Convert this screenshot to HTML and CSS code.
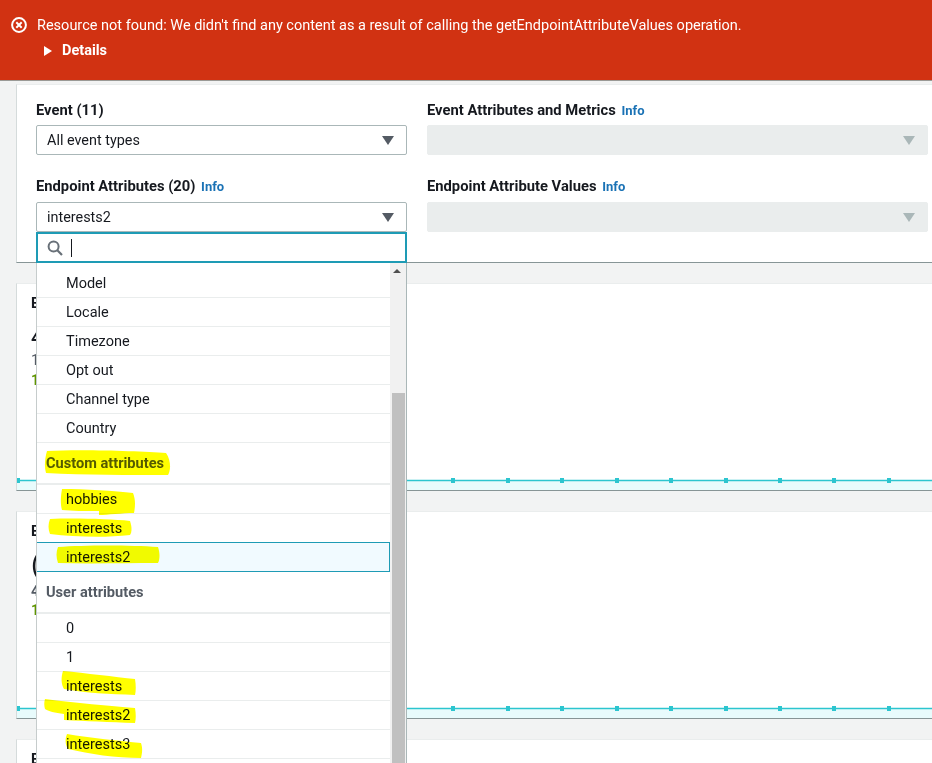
FILE: index.html
```html
<!DOCTYPE html>
<html lang="en">
<head>
<meta charset="utf-8">
<title>Endpoint attributes</title>
<link rel="stylesheet" href="styles.css">
</head>
<body>
<div class="banner">
  <svg class="banner-icon" width="16" height="16" viewBox="0 0 16 16"><circle cx="8" cy="8" r="6.9" fill="none" stroke="#fff" stroke-width="2"/><path d="M5.3 5.3l5.4 5.4M10.7 5.3l-5.4 5.4" stroke="#fff" stroke-width="2" fill="none"/></svg>
  <div class="banner-body">
    <div class="banner-msg">Resource not found: We didn't find any content as a result of calling the getEndpointAttributeValues operation.</div>
    <div class="banner-details"><span class="tri-right"></span><b>Details</b></div>
  </div>
</div>
<main class="main">
  <section class="panel">
    <div class="field">
      <div class="label label-tight">Event (11)</div>
      <div class="select"><span class="value">All event types</span><i class="tri-down"></i></div>
    </div>
    <div class="field">
      <div class="label label-tight">Event Attributes and Metrics <a class="info">Info</a></div>
      <div class="select disabled"><i class="tri-down"></i></div>
    </div>
    <div class="field">
      <div class="label">Endpoint Attributes (20) <a class="info">Info</a></div>
      <div class="select"><span class="value">interests2</span><i class="tri-down"></i></div>
      <div class="dropdown">
        <div class="search">
          <svg width="16" height="16" viewBox="0 0 16 16"><circle cx="6.6" cy="6.6" r="5" fill="none" stroke="#687078" stroke-width="2"/><path d="M10.3 10.3l4.7 4.7" stroke="#687078" stroke-width="2.2"/></svg>
          <span class="caret"></span>
        </div>
        <div class="list-wrap">
          <div class="list">
            <div class="opt">Model</div>
            <div class="opt">Locale</div>
            <div class="opt">Timezone</div>
            <div class="opt">Opt out</div>
            <div class="opt">Channel type</div>
            <div class="opt">Country</div>
            <div class="group">Custom attributes</div>
            <div class="opt">hobbies</div>
            <div class="opt">interests</div>
            <div class="opt selected">interests2</div>
            <div class="group">User attributes</div>
            <div class="opt">0</div>
            <div class="opt">1</div>
            <div class="opt">interests</div>
            <div class="opt">interests2</div>
            <div class="opt">interests3</div>
          </div>
          <div class="scrollbar"><i class="tri-up"></i><div class="thumb"></div></div>
        </div>
      </div>
    </div>
    <div class="field">
      <div class="label">Endpoint Attribute Values <a class="info">Info</a></div>
      <div class="select disabled"><i class="tri-down"></i></div>
    </div>
  </section>

  <section class="card">
    <div class="card-title">Endpoints</div>
    <div class="card-big">4</div>
    <div class="card-sub">1 total</div>
    <div class="card-up">1 up</div>
    <svg class="chart" width="916" height="10" viewBox="0 0 916 10">
      <rect x="0" y="0" width="916" height="10" fill="#e8fbfc"/>
      <path d="M0 0.5H916" stroke="#2cc5cf" stroke-width="1.4"/>
      <g fill="#2cc5cf"><rect x="0" y="-2" width="3" height="5"/><rect x="434" y="-2" width="4" height="5"/><rect x="489" y="-2" width="4" height="5"/><rect x="543" y="-2" width="4" height="5"/><rect x="598" y="-2" width="4" height="5"/><rect x="652" y="-2" width="4" height="5"/><rect x="707" y="-2" width="4" height="5"/><rect x="761" y="-2" width="4" height="5"/><rect x="815" y="-2" width="4" height="5"/><rect x="870" y="-2" width="4" height="5"/></g>
    </svg>
  </section>

  <section class="card">
    <div class="card-title">Endpoints</div>
    <div class="card-big card-big-paren">(</div>
    <div class="card-sub card-sub-tight">4 total</div>
    <div class="card-up card-up-tight">1 up</div>
    <svg class="chart" width="916" height="10" viewBox="0 0 916 10">
      <rect x="0" y="0" width="916" height="10" fill="#e8fbfc"/>
      <path d="M0 0.5H916" stroke="#2cc5cf" stroke-width="1.4"/>
      <g fill="#2cc5cf"><rect x="0" y="-2" width="3" height="5"/><rect x="434" y="-2" width="4" height="5"/><rect x="489" y="-2" width="4" height="5"/><rect x="543" y="-2" width="4" height="5"/><rect x="598" y="-2" width="4" height="5"/><rect x="652" y="-2" width="4" height="5"/><rect x="707" y="-2" width="4" height="5"/><rect x="761" y="-2" width="4" height="5"/><rect x="815" y="-2" width="4" height="5"/><rect x="870" y="-2" width="4" height="5"/></g>
    </svg>
  </section>

  <section class="card">
    <div class="card-title">Endpoints</div>
  </section>
</main>

<svg class="marker" width="932" height="763" viewBox="0 0 932 763" aria-hidden="true">
  <path d="M47 451 C80 449 140 451 166 453 C171 460 171 470 168 475 C130 475 85 475 46 473 C44 466 45 458 47 451Z"/>
  <path d="M62 489 C85 489 115 491 133 493 C136 500 135 508 134 513 C122 513 108 515 99 515 L99 511 C85 511 72 511 62 510 C60 503 61 495 62 489Z"/>
  <path d="M50 519 C75 518 110 519 130 521 C132 527 132 532 130 535 C105 538 75 537 50 534 C48 529 48 524 50 519Z"/>
  <path d="M58 547 C85 545 130 545 158 547 C160 553 160 559 158 563 C125 563 90 564 58 563 C56 557 56 552 58 547Z"/>
  <path d="M63 671 C85 673 115 677 135 679 C136 685 136 691 135 695 C110 694 85 693 64 689 C61 684 61 677 63 671Z"/>
  <path d="M45 699 C75 703 110 706 135 708 C136 714 136 719 135 723 C110 722 85 721 64 720 L64 714 C55 713 48 711 45 709 C44 706 44 702 45 699Z"/>
  <path d="M67 734 C90 738 120 741 141 743 C143 749 142 754 141 758 C115 758 90 754 68 749 C65 744 65 739 67 734Z"/>
</svg>
</body>
</html>
```

FILE: styles.css
```css
* { box-sizing: border-box; }
html, body { margin: 0; height: 763px; overflow: hidden; }
body {
  position: relative;
  background: #f2f3f3;
  color: #16191f;
  font-family: Roboto, "Liberation Sans", sans-serif;
  font-size: 14.5px;
  line-height: 20px;
}
.banner {
  height: 81px;
  background: #d13212;
  border-bottom: 1px solid #9a9a96;
  color: #fff;
  display: flex;
  padding: 17px 0 0 11px;
  gap: 10px;
}
.banner-msg { height: 20px; line-height: 18px; }
.banner-details { display: flex; align-items: center; gap: 10px; margin: 4px 0 0 7px; height: 20px; }
.tri-right { width: 0; height: 0; border-left: 8px solid #fff; border-top: 5px solid transparent; border-bottom: 5px solid transparent; }
.main { padding: 3px 0 0 16px; height: 682px; overflow: hidden; }
.panel {
  height: 179px;
  background: #fff;
  border-left: 1px solid #d5dbdb;
  border-top: 1px solid #eaeded;
  border-bottom: 1px solid #879596;
  display: grid;
  grid-template-columns: 371px 501px;
  grid-auto-rows: 76px;
  column-gap: 20px;
  padding: 15px 0 0 19px;
  margin-bottom: 20px;
}
.field { position: relative; }
.label { font-size: 14.75px; font-weight: 700; line-height: 20px; height: 26px; color: #16191f; }
.label-tight { height: 25px; }
.info { color: #1a72b5; font-size: 13px; font-weight: 700; margin-left: 2px; }
.select {
  height: 30px;
  border: 1px solid #aab7b8;
  border-radius: 2px;
  background: #fff;
  display: flex;
  align-items: center;
  justify-content: space-between;
  padding: 0 12px 0 10px;
  color: #16191f;
}
.value { padding-top: 2px; font-size: 14.4px; }
.select.disabled { background: #eaeded; border-color: #eaeded; padding-right: 12px; justify-content: flex-end; }
.tri-down { display: block; width: 0; height: 0; border-top: 9px solid #545b64; border-left: 6px solid transparent; border-right: 6px solid transparent; }
.disabled .tri-down { border-top-color: #aab7b8; }
.dropdown { position: absolute; left: 0; top: 56px; width: 371px; z-index: 5; }
.search {
  height: 31px;
  background: #fff;
  border: 2px solid #1e9bb5;
  display: flex;
  align-items: center;
  padding-left: 9px;
  gap: 8px;
}
.caret { width: 1px; height: 18px; background: #16191f; }
.list-wrap {
  height: 500px;
  padding-top: 6px;
  background: #fff;
  border-left: 1px solid #c6cccc;
  border-right: 1px solid #aab7b8;
  display: flex;
  overflow: hidden;
}
.list { width: 353px; flex: none; }
.opt {
  height: 29px;
  line-height: 29px;
  padding-left: 29px;
  border-bottom: 1px solid #eaeded;
  color: #16191f;
}
.opt.selected {
  margin: -1px 0 0 -1px;
  height: 30px;
  padding-left: 29px;
  background: #f1faff;
  border: 1px solid #1e9bb5;
}
.group {
  height: 42px;
  padding: 10px 0 0 9px;
  font-size: 14.6px;
  font-weight: 700;
  color: #545b64;
  border-bottom: 2px solid #eaeded;
}
.scrollbar { position: relative; flex: 1; background: #f1f1f1; margin-top: -6px; }
.tri-up { position: absolute; left: 3px; top: 6px; width: 0; height: 0; border-bottom: 4px solid #505050; border-left: 4px solid transparent; border-right: 4px solid transparent; }
.thumb { position: absolute; left: 2px; right: 1px; top: 130px; bottom: 0; background: #c0c0c0; }
.card {
  height: 208px;
  background: #fff;
  border-top: 1px solid #eaeded;
  border-left: 1px solid #d5dbdb;
  border-bottom: 1px solid #879596;
  margin-bottom: 20px;
  padding: 10px 0 0 14px;
  position: relative;
}
.card-title { font-weight: 700; }
.card-big { font-size: 18px; font-weight: 700; line-height: 24px; margin-top: 12px; }
.card-big-paren { font-size: 28px; font-weight: 400; line-height: 36px; margin-top: 5px; }
.card-sub { margin-top: 1px; color: #545b64; }
.card-sub-tight { margin-top: -1px; font-weight: 700; }
.card-up { color: #5f9400; font-weight: 700; }
.card-up-tight { margin-top: -1px; }
.chart { position: absolute; left: 0; bottom: 0; overflow: visible; }
.marker { position: absolute; left: 0; top: 0; z-index: 10; pointer-events: none; mix-blend-mode: multiply; fill: #ffff00; }
```
